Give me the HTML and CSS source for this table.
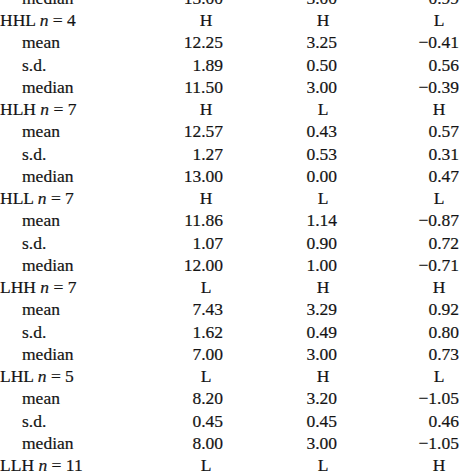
FILE: index.html
```html
<!DOCTYPE html>
<html>
<head>
<meta charset="utf-8">
<link rel="stylesheet" href="styles.css">
</head>
<body>
<div class="table">
  <div class="row"><span class="label sub">median</span><span class="cell c2">13.00</span><span class="cell c3">3.00</span><span class="cell c4">0.99</span></div>

  <div class="row"><span class="label">HHL <i>n</i> = 4</span><span class="cell c2"><span class="flag">H</span></span><span class="cell c3"><span class="flag">H</span></span><span class="cell c4"><span class="flag">L</span></span></div>
  <div class="row"><span class="label sub">mean</span><span class="cell c2">12.25</span><span class="cell c3">3.25</span><span class="cell c4">&minus;0.41</span></div>
  <div class="row"><span class="label sub">s.d.</span><span class="cell c2">1.89</span><span class="cell c3">0.50</span><span class="cell c4">0.56</span></div>
  <div class="row"><span class="label sub">median</span><span class="cell c2">11.50</span><span class="cell c3">3.00</span><span class="cell c4">&minus;0.39</span></div>

  <div class="row"><span class="label">HLH <i>n</i> = 7</span><span class="cell c2"><span class="flag">H</span></span><span class="cell c3"><span class="flag">L</span></span><span class="cell c4"><span class="flag">H</span></span></div>
  <div class="row"><span class="label sub">mean</span><span class="cell c2">12.57</span><span class="cell c3">0.43</span><span class="cell c4">0.57</span></div>
  <div class="row"><span class="label sub">s.d.</span><span class="cell c2">1.27</span><span class="cell c3">0.53</span><span class="cell c4">0.31</span></div>
  <div class="row"><span class="label sub">median</span><span class="cell c2">13.00</span><span class="cell c3">0.00</span><span class="cell c4">0.47</span></div>

  <div class="row"><span class="label">HLL <i>n</i> = 7</span><span class="cell c2"><span class="flag">H</span></span><span class="cell c3"><span class="flag">L</span></span><span class="cell c4"><span class="flag">L</span></span></div>
  <div class="row"><span class="label sub">mean</span><span class="cell c2">11.86</span><span class="cell c3">1.14</span><span class="cell c4">&minus;0.87</span></div>
  <div class="row"><span class="label sub">s.d.</span><span class="cell c2">1.07</span><span class="cell c3">0.90</span><span class="cell c4">0.72</span></div>
  <div class="row"><span class="label sub">median</span><span class="cell c2">12.00</span><span class="cell c3">1.00</span><span class="cell c4">&minus;0.71</span></div>

  <div class="row"><span class="label">LHH <i>n</i> = 7</span><span class="cell c2"><span class="flag">L</span></span><span class="cell c3"><span class="flag">H</span></span><span class="cell c4"><span class="flag">H</span></span></div>
  <div class="row"><span class="label sub">mean</span><span class="cell c2">7.43</span><span class="cell c3">3.29</span><span class="cell c4">0.92</span></div>
  <div class="row"><span class="label sub">s.d.</span><span class="cell c2">1.62</span><span class="cell c3">0.49</span><span class="cell c4">0.80</span></div>
  <div class="row"><span class="label sub">median</span><span class="cell c2">7.00</span><span class="cell c3">3.00</span><span class="cell c4">0.73</span></div>

  <div class="row"><span class="label">LHL <i>n</i> = 5</span><span class="cell c2"><span class="flag">L</span></span><span class="cell c3"><span class="flag">H</span></span><span class="cell c4"><span class="flag">L</span></span></div>
  <div class="row"><span class="label sub">mean</span><span class="cell c2">8.20</span><span class="cell c3">3.20</span><span class="cell c4">&minus;1.05</span></div>
  <div class="row"><span class="label sub">s.d.</span><span class="cell c2">0.45</span><span class="cell c3">0.45</span><span class="cell c4">0.46</span></div>
  <div class="row"><span class="label sub">median</span><span class="cell c2">8.00</span><span class="cell c3">3.00</span><span class="cell c4">&minus;1.05</span></div>

  <div class="row"><span class="label">LLH <i>n</i> = 11</span><span class="cell c2"><span class="flag">L</span></span><span class="cell c3"><span class="flag">L</span></span><span class="cell c4"><span class="flag">H</span></span></div>
</div>
</body>
</html>
```

FILE: styles.css
```css
html, body {
  margin: 0;
  padding: 0;
  background: #ffffff;
  overflow: hidden;
}

body {
  width: 474px;
  height: 474px;
  font-family: "Liberation Serif", "Times New Roman", serif;
  font-size: 17.5px;
  color: #141414;
  -webkit-text-stroke: 0.2px #141414;
}

.table {
  margin-top: -13.2px;
}

.row {
  display: grid;
  grid-template-columns: 150px 73px 114px 122px;
  height: 22.25px;
  line-height: 22.25px;
  white-space: nowrap;
}

.label {
  padding-left: 0;
}

.label.sub {
  padding-left: 22px;
}

.label i {
  font-style: italic;
}

.cell {
  text-align: right;
}

.flag {
  display: inline-block;
  text-align: center;
}

.c2 .flag { width: 34px; }
.c3 .flag { width: 28px; }
.c4 .flag { width: 40px; }
```
